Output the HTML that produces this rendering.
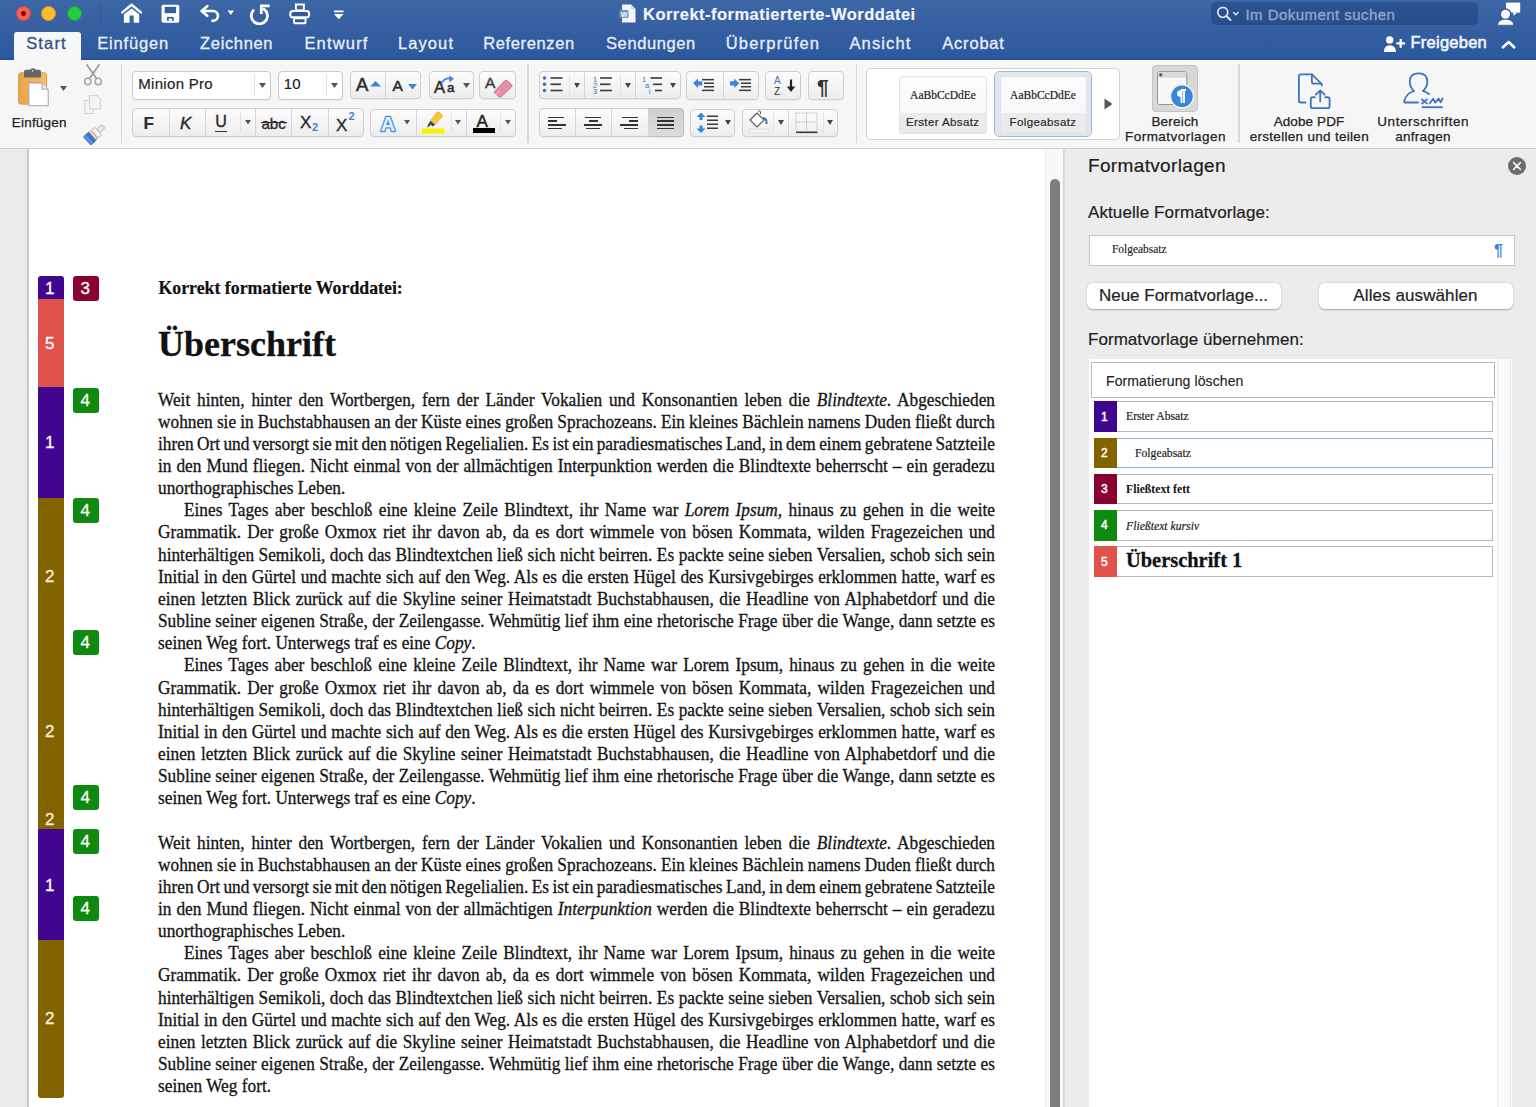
<!DOCTYPE html>
<html><head><meta charset="utf-8"><style>
*{margin:0;padding:0;box-sizing:border-box}
html,body{width:1536px;height:1107px;overflow:hidden;background:#fff;font-family:"Liberation Sans",sans-serif}
.a{position:absolute}
.doc{font-family:"Liberation Serif",serif;font-size:18.6px;color:#151515;text-align:justify;text-align-last:justify;white-space:nowrap;height:22px;line-height:22px;transform:scaleX(0.93);transform-origin:0 0;-webkit-text-stroke:0.32px #151515}
.doc.l{text-align-last:left}
.btn{background:linear-gradient(#fbfbfb,#ececec);border:1px solid #cdcdcd;border-radius:4px;box-shadow:0 0.5px 0.5px rgba(0,0,0,0.06)}
</style></head><body>
<div class="a" style="left:0px;top:0px;width:1536px;height:60px;background:linear-gradient(#3c66a5 0,#375fa1 45%,#2e5aa0 85%,#2b58a0 97%,#27477a 100%)"></div>
<div class="a" style="left:16.2px;top:6.2px;width:15px;height:15px;border-radius:50%;background:#fd5f57;border:1px solid #d8453e"></div>
<div class="a" style="left:41.3px;top:6.2px;width:15px;height:15px;border-radius:50%;background:#fdbb2e;border:1px solid #d99a1e"></div>
<div class="a" style="left:66.5px;top:6.2px;width:15px;height:15px;border-radius:50%;background:#27c93f;border:1px solid #1ea631"></div>
<div class="a" style="left:21.2px;top:11.2px;width:5px;height:5px;border-radius:50%;background:#7a0a06"></div>
<div class="a" style="left:100px;top:4px;width:1px;height:20px;background:rgba(0,0,0,0.12)"></div>
<svg class="a" style="left:120px;top:3px;" width="23" height="21" viewBox="0 0 23 21"><path d="M2.3 9.4 L11.6 1.7 L20.8 9.4" fill="none" stroke="#ffffff" stroke-width="2.5" stroke-linecap="round" stroke-linejoin="round"/><path d="M3.9 11.3 L11.6 5.4 L19.2 11.3 V19.8 H13.7 V12.6 H9.6 V19.8 H3.9 Z" fill="#ffffff"/></svg>
<svg class="a" style="left:161px;top:4px;" width="20" height="20" viewBox="0 0 20 20"><rect x="0.5" y="0.8" width="17.8" height="18" rx="1.8" fill="#ffffff"/><rect x="3.7" y="2.8" width="11.4" height="6.4" fill="#3560a0"/><rect x="6" y="12.9" width="6.8" height="3.9" fill="#3560a0"/><rect x="7.8" y="14.5" width="3.2" height="2.3" fill="#ffffff"/></svg>
<svg class="a" style="left:199px;top:4px;" width="22" height="20" viewBox="0 0 22 20"><path d="M8.2 2.2 L2.6 7 L8.2 11.8" fill="none" stroke="#ffffff" stroke-width="2.7" stroke-linecap="round" stroke-linejoin="round"/><path d="M3.2 7 H14 A4.9 4.9 0 0 1 14 16.8 H13.5" fill="none" stroke="#ffffff" stroke-width="2.7" stroke-linecap="round"/></svg>
<svg class="a" style="left:227px;top:10px;" width="8" height="6" viewBox="0 0 8 6"><path d="M0.5 0.5 H7 L3.75 5 Z" fill="#ffffff"/></svg>
<svg class="a" style="left:249px;top:3px;" width="23" height="22" viewBox="0 0 23 22"><path d="M4.2 7.5 A8.1 8.1 0 1 0 15 6.1" fill="none" stroke="#ffffff" stroke-width="2.7" stroke-linecap="round"/><path d="M12.3 11 V2.9 H20.6" fill="none" stroke="#ffffff" stroke-width="2.8"/></svg>
<svg class="a" style="left:289px;top:3px;" width="22" height="22" viewBox="0 0 22 22"><rect x="6.9" y="1.5" width="8" height="5.8" fill="none" stroke="#ffffff" stroke-width="1.9"/><rect x="1.3" y="8" width="18.8" height="6.4" rx="2.6" fill="#2f5a9c" stroke="#ffffff" stroke-width="2.1"/><rect x="5.1" y="15.4" width="11.4" height="4.8" rx="0.8" fill="#2f5a9c" stroke="#ffffff" stroke-width="1.9"/></svg>
<svg class="a" style="left:333px;top:9px;" width="12" height="12" viewBox="0 0 12 12"><rect x="1" y="1.5" width="9.5" height="1.8" fill="#ffffff"/><path d="M1 5 H10.5 L5.75 10.2 Z" fill="#ffffff"/></svg>
<svg class="a" style="left:619px;top:4px;" width="18" height="19" viewBox="0 0 18 19"><path d="M3 0.5 H12 L16.5 5 V18.5 H3 Z" fill="#f4f6fa"/><path d="M12 0.5 V5 H16.5" fill="#cfd8e6"/><rect x="0.5" y="6" width="9" height="8" rx="1" fill="#6d8fcc"/><text x="5" y="12.5" font-family="Liberation Sans" font-size="7" font-weight="bold" fill="#fff" text-anchor="middle">W</text></svg>
<div class="a" style="left:643.0px;top:5.8px;font-family:'Liberation Sans',sans-serif;font-size:16.5px;line-height:16.5px;font-weight:bold;color:#f2f5fb;white-space:nowrap;letter-spacing:0.48px;-webkit-text-stroke:0.15px #f2f5fb;">Korrekt-formatierterte-Worddatei</div>
<div class="a" style="left:1211px;top:2px;width:267px;height:23px;background:linear-gradient(#2b5291,#284d8b);border-radius:5px"></div>
<svg class="a" style="left:1216px;top:6px;" width="26" height="16" viewBox="0 0 26 16"><circle cx="6.8" cy="6.3" r="5" fill="none" stroke="#dfe6f2" stroke-width="1.7"/><path d="M10.5 10 L14.5 14" stroke="#dfe6f2" stroke-width="1.9" stroke-linecap="round"/><path d="M17.5 6.5 L19.8 8.8 L22.1 6.5" fill="none" stroke="#dfe6f2" stroke-width="1.4" stroke-linecap="round"/></svg>
<div class="a" style="left:1245.5px;top:7.4px;font-family:'Liberation Sans',sans-serif;font-size:15px;line-height:15px;font-weight:normal;color:#91a7cc;white-space:nowrap;letter-spacing:0.45px;-webkit-text-stroke:0.35px #91a7cc;">Im Dokument suchen</div>
<svg class="a" style="left:1497px;top:2px;" width="24" height="24" viewBox="0 0 24 24"><rect x="9" y="0.6" width="14.2" height="10" fill="#ffffff"/><path d="M16.2 10.4 L16.5 13.8 L20.6 10.4 Z" fill="#ffffff"/><circle cx="8.5" cy="12.2" r="5.2" fill="#ffffff" stroke="#2f5b9e" stroke-width="1.4"/><path d="M0.6 23.2 Q1 17.2 8.5 17.2 Q16 17.2 16.9 23.2 Z" fill="#ffffff" stroke="#2f5b9e" stroke-width="0.8"/></svg>
<div class="a" style="left:13.5px;top:32px;width:67px;height:29px;background:#f7f7f7;border-radius:3px 3px 0 0"></div>
<div class="a" style="left:-103.5px;top:35.3px;font-family:'Liberation Sans',sans-serif;font-size:16.5px;line-height:16.5px;font-weight:normal;color:#2e5287;white-space:nowrap;letter-spacing:1.18px;-webkit-text-stroke:0.3px #2e5287;width:300px;text-align:center;">Start</div>
<div class="a" style="left:-16.9px;top:35.3px;font-family:'Liberation Sans',sans-serif;font-size:16.5px;line-height:16.5px;font-weight:normal;color:#e9eef7;white-space:nowrap;letter-spacing:0.83px;-webkit-text-stroke:0.3px #e9eef7;width:300px;text-align:center;">Einfügen</div>
<div class="a" style="left:86.6px;top:35.3px;font-family:'Liberation Sans',sans-serif;font-size:16.5px;line-height:16.5px;font-weight:normal;color:#e9eef7;white-space:nowrap;letter-spacing:0.64px;-webkit-text-stroke:0.3px #e9eef7;width:300px;text-align:center;">Zeichnen</div>
<div class="a" style="left:186.5px;top:35.3px;font-family:'Liberation Sans',sans-serif;font-size:16.5px;line-height:16.5px;font-weight:normal;color:#e9eef7;white-space:nowrap;letter-spacing:1.17px;-webkit-text-stroke:0.3px #e9eef7;width:300px;text-align:center;">Entwurf</div>
<div class="a" style="left:276.0px;top:35.3px;font-family:'Liberation Sans',sans-serif;font-size:16.5px;line-height:16.5px;font-weight:normal;color:#e9eef7;white-space:nowrap;letter-spacing:1.1px;-webkit-text-stroke:0.3px #e9eef7;width:300px;text-align:center;">Layout</div>
<div class="a" style="left:379.0px;top:35.3px;font-family:'Liberation Sans',sans-serif;font-size:16.5px;line-height:16.5px;font-weight:normal;color:#e9eef7;white-space:nowrap;letter-spacing:0.63px;-webkit-text-stroke:0.3px #e9eef7;width:300px;text-align:center;">Referenzen</div>
<div class="a" style="left:500.9px;top:35.3px;font-family:'Liberation Sans',sans-serif;font-size:16.5px;line-height:16.5px;font-weight:normal;color:#e9eef7;white-space:nowrap;letter-spacing:0.59px;-webkit-text-stroke:0.3px #e9eef7;width:300px;text-align:center;">Sendungen</div>
<div class="a" style="left:623.0px;top:35.3px;font-family:'Liberation Sans',sans-serif;font-size:16.5px;line-height:16.5px;font-weight:normal;color:#e9eef7;white-space:nowrap;letter-spacing:1.19px;-webkit-text-stroke:0.3px #e9eef7;width:300px;text-align:center;">Überprüfen</div>
<div class="a" style="left:730.5px;top:35.3px;font-family:'Liberation Sans',sans-serif;font-size:16.5px;line-height:16.5px;font-weight:normal;color:#e9eef7;white-space:nowrap;letter-spacing:1.13px;-webkit-text-stroke:0.3px #e9eef7;width:300px;text-align:center;">Ansicht</div>
<div class="a" style="left:823.5px;top:35.3px;font-family:'Liberation Sans',sans-serif;font-size:16.5px;line-height:16.5px;font-weight:normal;color:#e9eef7;white-space:nowrap;letter-spacing:0.8px;-webkit-text-stroke:0.3px #e9eef7;width:300px;text-align:center;">Acrobat</div>
<svg class="a" style="left:1383px;top:36px;" width="23" height="17" viewBox="0 0 23 17"><circle cx="6.7" cy="3.9" r="3.7" fill="#ffffff"/><path d="M0.9 15.9 Q1 9.2 6.8 9.2 Q12.6 9.2 13 15.9 Z" fill="#ffffff"/><path d="M17.7 2.9 V11.7 M13.3 7.3 H22" stroke="#ffffff" stroke-width="2.3"/></svg>
<div class="a" style="left:1410.5px;top:34.1px;font-family:'Liberation Sans',sans-serif;font-size:16.5px;line-height:16.5px;font-weight:normal;color:#f2f5fb;white-space:nowrap;letter-spacing:0.25px;-webkit-text-stroke:0.6px #f2f5fb;">Freigeben</div>
<svg class="a" style="left:1501px;top:39.5px;" width="15" height="9" viewBox="0 0 15 9"><path d="M2 7.3 L7.6 2 L13.2 7.3" fill="none" stroke="#ffffff" stroke-width="2.6" stroke-linecap="round" stroke-linejoin="round"/></svg>
<div class="a" style="left:0px;top:60px;width:1536px;height:88px;background:#f6f6f6"></div>
<div class="a" style="left:0px;top:147.5px;width:1536px;height:1.5px;background:#cdcdcd"></div>
<svg class="a" style="left:17px;top:68px;" width="33" height="39" viewBox="0 0 33 39"><defs><linearGradient id="cb" x1="0" x2="1"><stop offset="0" stop-color="#e9a445"/><stop offset="1" stop-color="#f2bd6b"/></linearGradient></defs><rect x="1.6" y="4.7" width="28" height="31.5" rx="2.5" fill="url(#cb)" stroke="#d7923a" stroke-width="0.8"/><path d="M7 3.5 Q7 1.8 9 1.8 H13 Q13.5 0.3 16 0.3 Q18.5 0.3 19 1.8 H22 Q24 1.8 24 3.5 V9.5 H7 Z" fill="#666"/><circle cx="15.6" cy="2.8" r="0.9" fill="#ddd"/><path d="M11.8 15 H25 L31.2 21.2 V37.7 H11.8 Z" fill="#fff" stroke="#9a9a9a" stroke-width="0.9"/><path d="M25 15 V21.2 H31.2" fill="#eee" stroke="#9a9a9a" stroke-width="0.9"/></svg>
<svg class="a" style="left:60.0px;top:86.0px;" width="7" height="5" viewBox="0 0 7 5"><path d="M0 0 H7 L3.5 5 Z" fill="#555"/></svg>
<div class="a" style="left:11.8px;top:115.5px;font-family:'Liberation Sans',sans-serif;font-size:13.5px;line-height:13.5px;font-weight:normal;color:#222;white-space:nowrap;letter-spacing:0.2px;-webkit-text-stroke:0.25px #222;">Einfügen</div>
<svg class="a" style="left:83px;top:64px;" width="20" height="22" viewBox="0 0 20 22"><path d="M4 1 L13.5 14.5 M16 1 L6.5 14.5" stroke="#9c9c9c" stroke-width="1.7" stroke-linecap="round"/><circle cx="4.8" cy="17.5" r="3.2" fill="none" stroke="#a8a8a8" stroke-width="1.5"/><circle cx="15.2" cy="17.5" r="3.2" fill="none" stroke="#a8a8a8" stroke-width="1.5"/></svg>
<svg class="a" style="left:83px;top:94px;" width="20" height="21" viewBox="0 0 20 21"><path d="M1.8 6.5 H10 V19.5 H1.8 Z" fill="none" stroke="#d4d4d4" stroke-width="1.2"/><path d="M6.5 1.5 H14 L17.5 5 V15 H6.5 Z" fill="#f4f4f4" stroke="#d4d4d4" stroke-width="1.2"/></svg>
<svg class="a" style="left:81px;top:121px;" width="26" height="24" viewBox="0 0 26 24"><g transform="translate(1.5 0.5) rotate(-42 13 12) scale(0.92) translate(1 1)"><rect x="1" y="6" width="8" height="12" rx="1" fill="#3a76c8" stroke="#2b5a9c" stroke-width="0.8"/><rect x="1.5" y="6.5" width="3" height="11" fill="#5b95dc"/><rect x="9" y="6.5" width="8" height="11" fill="#f7f7f7" stroke="#a9a9a9" stroke-width="0.8"/><rect x="10.5" y="6.8" width="2" height="10.4" fill="#d2b48a"/><rect x="17" y="9.3" width="8" height="5.4" rx="2.4" fill="#ece7da" stroke="#a9a9a9" stroke-width="0.8"/></g></svg>
<div class="a" style="left:120.5px;top:64px;width:1.5px;height:79px;background:#d9d9d9"></div>
<div class="a" style="left:132.3px;top:70.5px;width:139.2px;height:29px;background:#fff;border:1px solid #c9c9c9;border-radius:4px;box-shadow:0 1px 0 rgba(0,0,0,0.05)"></div>
<div class="a" style="left:254.4px;top:74px;width:1px;height:22px;background:#e3e3e3"></div>
<svg class="a" style="left:259.0px;top:82.5px;" width="7" height="5" viewBox="0 0 7 5"><path d="M0 0 H7 L3.5 5 Z" fill="#555"/></svg>
<div class="a" style="left:138.3px;top:76.2px;font-family:'Liberation Sans',sans-serif;font-size:15px;line-height:15px;font-weight:normal;color:#1e1e1e;white-space:nowrap;letter-spacing:0.3px;-webkit-text-stroke:0.2px #1e1e1e;">Minion Pro</div>
<div class="a" style="left:277.5px;top:70.5px;width:65.1px;height:29px;background:#fff;border:1px solid #c9c9c9;border-radius:4px;box-shadow:0 1px 0 rgba(0,0,0,0.05)"></div>
<div class="a" style="left:325.5px;top:74px;width:1px;height:22px;background:#e3e3e3"></div>
<svg class="a" style="left:330.5px;top:82.5px;" width="7" height="5" viewBox="0 0 7 5"><path d="M0 0 H7 L3.5 5 Z" fill="#555"/></svg>
<div class="a" style="left:283.7px;top:76.2px;font-family:'Liberation Sans',sans-serif;font-size:15px;line-height:15px;font-weight:normal;color:#1e1e1e;white-space:nowrap;letter-spacing:0.3px;-webkit-text-stroke:0.2px #1e1e1e;">10</div>
<div class="a" style="left:349.7px;top:71.3px;width:71.30000000000001px;height:27.799999999999997px;background:linear-gradient(#fcfcfc,#ededed);border:1px solid #cfcfcf;border-radius:4px;box-shadow:0 1px 0 rgba(0,0,0,0.04)"></div>
<div class="a" style="left:385.2px;top:72.3px;width:1px;height:25.799999999999997px;background:#d6d6d6"></div>
<div class="a" style="left:356.0px;top:76.0px;font-family:'Liberation Sans',sans-serif;font-size:18.5px;line-height:18.5px;font-weight:normal;color:#2b2b2b;white-space:nowrap;-webkit-text-stroke:0.55px #2b2b2b;">A</div>
<svg class="a" style="left:370px;top:81px;" width="11" height="6" viewBox="0 0 11 6"><path d="M0 5.5 L5.5 0 L11 5.5 Z" fill="#3a86d6"/></svg>
<div class="a" style="left:392.5px;top:78.4px;font-family:'Liberation Sans',sans-serif;font-size:15.5px;line-height:15.5px;font-weight:normal;color:#2b2b2b;white-space:nowrap;-webkit-text-stroke:0.5px #2b2b2b;">A</div>
<svg class="a" style="left:407.5px;top:84px;" width="9" height="6" viewBox="0 0 9 6"><path d="M0 0 H9 L4.5 5.5 Z" fill="#3a86d6"/></svg>
<div class="a" style="left:428.5px;top:71.3px;width:45.10000000000002px;height:27.799999999999997px;background:linear-gradient(#fcfcfc,#ededed);border:1px solid #cfcfcf;border-radius:4px;box-shadow:0 1px 0 rgba(0,0,0,0.04)"></div>
<div class="a" style="left:434.0px;top:78.5px;font-family:'Liberation Sans',sans-serif;font-size:16.5px;line-height:16.5px;font-weight:normal;color:#2b2b2b;white-space:nowrap;-webkit-text-stroke:0.5px #2b2b2b;">A</div>
<div class="a" style="left:447.0px;top:81.1px;font-family:'Liberation Sans',sans-serif;font-size:13.5px;line-height:13.5px;font-weight:normal;color:#2b2b2b;white-space:nowrap;-webkit-text-stroke:0.5px #2b2b2b;">a</div>
<svg class="a" style="left:440px;top:75px;" width="16" height="10" viewBox="0 0 16 10"><path d="M1.5 8.5 Q4 2.5 11 3.5" fill="none" stroke="#3a86d6" stroke-width="1.8"/><path d="M9 0.5 L14 3.5 L9.5 7.5 Z" fill="#3a86d6"/></svg>
<svg class="a" style="left:462.5px;top:82.5px;" width="7" height="5" viewBox="0 0 7 5"><path d="M0 0 H7 L3.5 5 Z" fill="#555"/></svg>
<div class="a" style="left:479.2px;top:71.3px;width:36.50000000000006px;height:27.799999999999997px;background:linear-gradient(#fcfcfc,#ededed);border:1px solid #cfcfcf;border-radius:4px;box-shadow:0 1px 0 rgba(0,0,0,0.04)"></div>
<div class="a" style="left:485.0px;top:74.9px;font-family:'Liberation Sans',sans-serif;font-size:15.5px;line-height:15.5px;font-weight:normal;color:#3a3a3a;white-space:nowrap;-webkit-text-stroke:0.4px #3a3a3a;">A</div>
<svg class="a" style="left:491px;top:78px;" width="23" height="20" viewBox="0 0 23 20"><path d="M3 14 L13.5 3 Q15 1.5 16.5 2.8 L20.5 6.5 Q21.7 7.8 20.3 9.2 L10.5 18.5 Q9 19.8 7.5 18.5 L3.3 14.6 Z" fill="#e48fa8" stroke="#c96c88" stroke-width="0.9"/><path d="M5 16.5 L9 12.8" stroke="#f5c3d2" stroke-width="1"/></svg>
<div class="a" style="left:527px;top:64px;width:1.5px;height:79px;background:#d9d9d9"></div>
<div class="a" style="left:132.3px;top:108.4px;width:231.7px;height:28.5px;background:linear-gradient(#fcfcfc,#ededed);border:1px solid #cfcfcf;border-radius:4px;box-shadow:0 1px 0 rgba(0,0,0,0.04)"></div>
<div class="a" style="left:168.6px;top:109.4px;width:1px;height:26.5px;background:#d6d6d6"></div>
<div class="a" style="left:204.8px;top:109.4px;width:1px;height:26.5px;background:#d6d6d6"></div>
<div class="a" style="left:255.2px;top:109.4px;width:1px;height:26.5px;background:#d6d6d6"></div>
<div class="a" style="left:291.3px;top:109.4px;width:1px;height:26.5px;background:#d6d6d6"></div>
<div class="a" style="left:327.6px;top:109.4px;width:1px;height:26.5px;background:#d6d6d6"></div>
<div class="a" style="left:240.2px;top:112.4px;width:1px;height:20.5px;background:#e2e2e2"></div>
<div class="a" style="left:143.5px;top:114.6px;font-family:'Liberation Sans',sans-serif;font-size:17px;line-height:17px;font-weight:bold;color:#2b2b2b;white-space:nowrap;-webkit-text-stroke:0.2px #2b2b2b;">F</div>
<div class="a" style="left:180.0px;top:114.6px;font-family:'Liberation Sans',sans-serif;font-size:17px;line-height:17px;font-weight:normal;color:#2b2b2b;white-space:nowrap;font-style:italic;-webkit-text-stroke:0.4px #2b2b2b;">K</div>
<div class="a" style="left:215.2px;top:113.5px;font-family:'Liberation Sans',sans-serif;font-size:16px;line-height:16px;font-weight:normal;color:#2b2b2b;white-space:nowrap;-webkit-text-stroke:0.4px #2b2b2b;">U</div>
<div class="a" style="left:215px;top:130.5px;width:12px;height:1.6px;background:#333"></div>
<svg class="a" style="left:244.8px;top:120.05px;" width="6" height="4.5" viewBox="0 0 6 4.5"><path d="M0 0 H6 L3.0 4.5 Z" fill="#555"/></svg>
<div class="a" style="left:261.5px;top:115.8px;font-family:'Liberation Sans',sans-serif;font-size:15px;line-height:15px;font-weight:normal;color:#2b2b2b;white-space:nowrap;-webkit-text-stroke:0.4px #2b2b2b;">abc</div>
<div class="a" style="left:261px;top:122.2px;width:26px;height:1.3px;background:#333"></div>
<div class="a" style="left:300.0px;top:114.1px;font-family:'Liberation Sans',sans-serif;font-size:17px;line-height:17px;font-weight:normal;color:#2b2b2b;white-space:nowrap;-webkit-text-stroke:0.4px #2b2b2b;">X</div>
<div class="a" style="left:312.0px;top:122.2px;font-family:'Liberation Sans',sans-serif;font-size:11px;line-height:11px;font-weight:bold;color:#3a86d6;white-space:nowrap;">2</div>
<div class="a" style="left:336.0px;top:116.6px;font-family:'Liberation Sans',sans-serif;font-size:17px;line-height:17px;font-weight:normal;color:#2b2b2b;white-space:nowrap;-webkit-text-stroke:0.4px #2b2b2b;">X</div>
<div class="a" style="left:348.5px;top:111.2px;font-family:'Liberation Sans',sans-serif;font-size:11px;line-height:11px;font-weight:bold;color:#3a86d6;white-space:nowrap;">2</div>
<div class="a" style="left:370.4px;top:109px;width:145.30000000000007px;height:27.80000000000001px;background:linear-gradient(#fcfcfc,#ededed);border:1px solid #cfcfcf;border-radius:4px;box-shadow:0 1px 0 rgba(0,0,0,0.04)"></div>
<div class="a" style="left:415.5px;top:110px;width:1px;height:25.80000000000001px;background:#d6d6d6"></div>
<div class="a" style="left:465.6px;top:110px;width:1px;height:25.80000000000001px;background:#d6d6d6"></div>
<div class="a" style="left:450.8px;top:113px;width:1px;height:19.80000000000001px;background:#e2e2e2"></div>
<div class="a" style="left:500px;top:113px;width:1px;height:19.80000000000001px;background:#e2e2e2"></div>
<svg class="a" style="left:377px;top:110px;" width="24" height="24" viewBox="0 0 24 24"><text x="11" y="20.5" font-family="Liberation Sans" font-weight="bold" font-size="20" text-anchor="middle" fill="#dff0fc" stroke="#4a8fd6" stroke-width="2.6" stroke-linejoin="round" paint-order="stroke">A</text></svg>
<svg class="a" style="left:404.0px;top:120.25px;" width="6" height="4.5" viewBox="0 0 6 4.5"><path d="M0 0 H6 L3.0 4.5 Z" fill="#555"/></svg>
<svg class="a" style="left:421px;top:110px;" width="24" height="24" viewBox="0 0 24 24"><path d="M9.5 11 L15.5 2.5 Q16.5 1.2 17.8 2.2 L21 4.8 Q22 5.8 21 7 L14 14.5 Z" fill="#f6c344" stroke="#e0a92a" stroke-width="0.7"/><path d="M9.5 11 L14 14.5 L12 16.5 L7.8 13 Z" fill="#3d3d3d"/><path d="M7.8 13 L10 15.2 L6 17.5 Z" fill="#3d3d3d"/><rect x="0.5" y="18.5" width="23" height="5" fill="#fbf200"/></svg>
<svg class="a" style="left:455.0px;top:120.25px;" width="6" height="4.5" viewBox="0 0 6 4.5"><path d="M0 0 H6 L3.0 4.5 Z" fill="#555"/></svg>
<div class="a" style="left:476.5px;top:113.1px;font-family:'Liberation Sans',sans-serif;font-size:17px;line-height:17px;font-weight:normal;color:#222;white-space:nowrap;-webkit-text-stroke:0.5px #222;">A</div>
<div class="a" style="left:473px;top:128px;width:22px;height:5px;background:#000"></div>
<svg class="a" style="left:505.0px;top:120.25px;" width="6" height="4.5" viewBox="0 0 6 4.5"><path d="M0 0 H6 L3.0 4.5 Z" fill="#555"/></svg>
<div class="a" style="left:538.5px;top:70.9px;width:142.0px;height:28.099999999999994px;background:linear-gradient(#fcfcfc,#ededed);border:1px solid #cfcfcf;border-radius:4px;box-shadow:0 1px 0 rgba(0,0,0,0.04)"></div>
<div class="a" style="left:584.2px;top:71.9px;width:1px;height:26.099999999999994px;background:#d6d6d6"></div>
<div class="a" style="left:635.2px;top:71.9px;width:1px;height:26.099999999999994px;background:#d6d6d6"></div>
<div class="a" style="left:569.4px;top:74.9px;width:1px;height:20.099999999999994px;background:#e2e2e2"></div>
<div class="a" style="left:619.6px;top:74.9px;width:1px;height:20.099999999999994px;background:#e2e2e2"></div>
<svg class="a" style="left:542px;top:75px;" width="24" height="19" viewBox="0 0 24 19"><circle cx="2.5" cy="3" r="1.8" fill="#3b72bf"/><circle cx="2.5" cy="9.3" r="1.8" fill="#3b72bf"/><circle cx="2.5" cy="15.5" r="1.8" fill="#3b72bf"/><rect x="8.5" y="2.2" width="12" height="1.6" fill="#3a3a3a"/><rect x="8.5" y="8.5" width="10.5" height="1.6" fill="#3a3a3a"/><rect x="8.5" y="14.7" width="12" height="1.6" fill="#3a3a3a"/></svg>
<svg class="a" style="left:574.4px;top:82.5px;" width="6" height="5" viewBox="0 0 6 5"><path d="M0 0 H6 L3.0 5 Z" fill="#444"/></svg>
<svg class="a" style="left:591px;top:75px;" width="24" height="20" viewBox="0 0 24 20"><text x="4" y="6.5" font-family="Liberation Sans" font-size="7.5" fill="#3b72bf" text-anchor="middle">1</text><text x="4" y="12.8" font-family="Liberation Sans" font-size="7.5" fill="#3b72bf" text-anchor="middle">2</text><text x="4" y="19" font-family="Liberation Sans" font-size="7.5" fill="#3b72bf" text-anchor="middle">3</text><rect x="9" y="2.2" width="12" height="1.6" fill="#3a3a3a"/><rect x="9" y="8.5" width="10.5" height="1.6" fill="#3a3a3a"/><rect x="9" y="14.7" width="12" height="1.6" fill="#3a3a3a"/></svg>
<svg class="a" style="left:624.5px;top:82.5px;" width="6" height="5" viewBox="0 0 6 5"><path d="M0 0 H6 L3.0 5 Z" fill="#444"/></svg>
<svg class="a" style="left:641px;top:75px;" width="24" height="20" viewBox="0 0 24 20"><text x="3" y="6.5" font-family="Liberation Sans" font-size="7.5" fill="#3b72bf" text-anchor="middle">1</text><text x="6" y="12.8" font-family="Liberation Sans" font-size="7.5" fill="#3b72bf" text-anchor="middle">a</text><text x="8.5" y="19" font-family="Liberation Sans" font-size="7.5" fill="#3b72bf" text-anchor="middle">i</text><rect x="9.5" y="2.2" width="11.5" height="1.6" fill="#3a3a3a"/><rect x="12" y="8.5" width="9" height="1.6" fill="#3a3a3a"/><rect x="14" y="14.7" width="7" height="1.6" fill="#3a3a3a"/></svg>
<svg class="a" style="left:670.0px;top:82.5px;" width="6" height="5" viewBox="0 0 6 5"><path d="M0 0 H6 L3.0 5 Z" fill="#444"/></svg>
<div class="a" style="left:686.4px;top:70.8px;width:73.10000000000002px;height:28.900000000000006px;background:linear-gradient(#fcfcfc,#ededed);border:1px solid #cfcfcf;border-radius:4px;box-shadow:0 1px 0 rgba(0,0,0,0.04)"></div>
<div class="a" style="left:722.8px;top:71.8px;width:1px;height:26.900000000000006px;background:#d6d6d6"></div>
<svg class="a" style="left:692px;top:77px;" width="24" height="17" viewBox="0 0 24 17"><path d="M1 6.3 L6 1.5 V4.2 H10.3 V8.4 H6 V11.1 Z" fill="#3a86d6"/><rect x="10" y="1.9" width="12" height="1.5" fill="#3a3a3a"/><rect x="12" y="5.5" width="10" height="1.5" fill="#3a3a3a"/><rect x="12" y="9" width="10" height="1.5" fill="#3a3a3a"/><rect x="10" y="12.6" width="12" height="1.5" fill="#3a3a3a"/></svg>
<svg class="a" style="left:729px;top:77px;" width="24" height="17" viewBox="0 0 24 17"><path d="M10.3 6.3 L5.3 1.5 V4.2 H1 V8.4 H5.3 V11.1 Z" fill="#3a86d6"/><rect x="10" y="1.9" width="12" height="1.5" fill="#3a3a3a"/><rect x="12" y="5.5" width="10" height="1.5" fill="#3a3a3a"/><rect x="12" y="9" width="10" height="1.5" fill="#3a3a3a"/><rect x="10" y="12.6" width="12" height="1.5" fill="#3a3a3a"/></svg>
<div class="a" style="left:765.3px;top:70.8px;width:36.0px;height:28.900000000000006px;background:linear-gradient(#fcfcfc,#ededed);border:1px solid #cfcfcf;border-radius:4px;box-shadow:0 1px 0 rgba(0,0,0,0.04)"></div>
<div class="a" style="left:774.0px;top:76.0px;font-family:'Liberation Sans',sans-serif;font-size:10px;line-height:10px;font-weight:normal;color:#3b72bf;white-space:nowrap;">A</div>
<div class="a" style="left:774.0px;top:86.5px;font-family:'Liberation Sans',sans-serif;font-size:10px;line-height:10px;font-weight:normal;color:#333;white-space:nowrap;">Z</div>
<svg class="a" style="left:786px;top:79px;" width="10" height="14" viewBox="0 0 10 14"><path d="M5 0.5 V10" stroke="#222" stroke-width="2.2"/><path d="M0.8 7.5 L5 13 L9.2 7.5 Z" fill="#222"/></svg>
<div class="a" style="left:808.3px;top:70.8px;width:35.700000000000045px;height:28.900000000000006px;background:linear-gradient(#fcfcfc,#ededed);border:1px solid #cfcfcf;border-radius:4px;box-shadow:0 1px 0 rgba(0,0,0,0.04)"></div>
<div class="a" style="left:817.0px;top:75.7px;font-family:'Liberation Sans',sans-serif;font-size:21px;line-height:21px;font-weight:bold;color:#333;white-space:nowrap;">¶</div>
<div class="a" style="left:855.5px;top:64px;width:1.5px;height:79px;background:#d9d9d9"></div>
<div class="a" style="left:538.5px;top:108.4px;width:145.5px;height:28.599999999999994px;background:linear-gradient(#fcfcfc,#ededed);border:1px solid #cfcfcf;border-radius:4px;box-shadow:0 1px 0 rgba(0,0,0,0.04)"></div>
<div class="a" style="left:647.7px;top:108.4px;width:36.299999999999955px;height:28.599999999999994px;background:linear-gradient(#cfcfcf,#dcdcdc);border:1px solid #bdbdbd;border-radius:0 4px 4px 0"></div>
<div class="a" style="left:574.8px;top:109.4px;width:1px;height:26.599999999999994px;background:#d6d6d6"></div>
<div class="a" style="left:611.3px;top:109.4px;width:1px;height:26.599999999999994px;background:#d6d6d6"></div>
<div class="a" style="left:647.7px;top:109.4px;width:1px;height:26.599999999999994px;background:#d6d6d6"></div>
<div class="a" style="left:548px;top:116.5px;width:16px;height:1.6px;background:#333"></div>
<div class="a" style="left:548px;top:120.2px;width:9px;height:1.6px;background:#333"></div>
<div class="a" style="left:548px;top:124px;width:18px;height:1.6px;background:#333"></div>
<div class="a" style="left:548px;top:127.7px;width:14px;height:1.6px;background:#333"></div>
<div class="a" style="left:585.0px;top:116.5px;width:16px;height:1.6px;background:#333"></div>
<div class="a" style="left:588.5px;top:120.2px;width:9px;height:1.6px;background:#333"></div>
<div class="a" style="left:584.0px;top:124px;width:18px;height:1.6px;background:#333"></div>
<div class="a" style="left:586.0px;top:127.7px;width:14px;height:1.6px;background:#333"></div>
<div class="a" style="left:622px;top:116.5px;width:16px;height:1.6px;background:#333"></div>
<div class="a" style="left:629px;top:120.2px;width:9px;height:1.6px;background:#333"></div>
<div class="a" style="left:620px;top:124px;width:18px;height:1.6px;background:#333"></div>
<div class="a" style="left:624px;top:127.7px;width:14px;height:1.6px;background:#333"></div>
<div class="a" style="left:656.5px;top:116.5px;width:17.5px;height:1.6px;background:#333"></div>
<div class="a" style="left:656.5px;top:120.2px;width:17.5px;height:1.6px;background:#333"></div>
<div class="a" style="left:656.5px;top:124px;width:17.5px;height:1.6px;background:#333"></div>
<div class="a" style="left:656.5px;top:127.7px;width:17.5px;height:1.6px;background:#333"></div>
<div class="a" style="left:690.3px;top:108.9px;width:45.0px;height:27.900000000000006px;background:linear-gradient(#fcfcfc,#ededed);border:1px solid #cfcfcf;border-radius:4px;box-shadow:0 1px 0 rgba(0,0,0,0.04)"></div>
<svg class="a" style="left:696px;top:112px;" width="25" height="22" viewBox="0 0 25 22"><path d="M5 0.5 L9.5 5 H6.5 V8 H3.5 V5 H0.5 Z" fill="#3a86d6"/><path d="M5 21 L9.5 16.5 H6.5 V13.5 H3.5 V16.5 H0.5 Z" fill="#3a86d6"/><rect x="11" y="3.5" width="11" height="1.5" fill="#3a3a3a"/><rect x="11" y="7.5" width="11" height="1.5" fill="#3a3a3a"/><rect x="11" y="11.5" width="11" height="1.5" fill="#3a3a3a"/><rect x="11" y="15.5" width="11" height="1.5" fill="#3a3a3a"/></svg>
<svg class="a" style="left:724.5px;top:120.0px;" width="6" height="5" viewBox="0 0 6 5"><path d="M0 0 H6 L3.0 5 Z" fill="#444"/></svg>
<div class="a" style="left:741.5px;top:108.9px;width:96.70000000000005px;height:27.900000000000006px;background:linear-gradient(#fcfcfc,#ededed);border:1px solid #cfcfcf;border-radius:4px;box-shadow:0 1px 0 rgba(0,0,0,0.04)"></div>
<div class="a" style="left:787.8px;top:109.9px;width:1px;height:25.900000000000006px;background:#d6d6d6"></div>
<div class="a" style="left:773px;top:112.9px;width:1px;height:19.900000000000006px;background:#e2e2e2"></div>
<div class="a" style="left:823px;top:112.9px;width:1px;height:19.900000000000006px;background:#e2e2e2"></div>
<svg class="a" style="left:747px;top:110px;" width="24" height="24" viewBox="0 0 24 24"><path d="M3 10 L10 3 L17 10 L10 17 Z" fill="#fff" stroke="#555" stroke-width="1.1"/><path d="M11 1.5 Q12.5 0 13.5 1.5 V4" fill="none" stroke="#555" stroke-width="1"/><path d="M16 8 Q19.5 8.5 19.5 12 V14" fill="none" stroke="#3b72bf" stroke-width="2"/><rect x="1.5" y="19" width="21" height="4" rx="1.5" fill="#f3f3f3" stroke="#d8d8d8" stroke-width="0.8"/></svg>
<svg class="a" style="left:777.5px;top:120.0px;" width="6" height="5" viewBox="0 0 6 5"><path d="M0 0 H6 L3.0 5 Z" fill="#444"/></svg>
<svg class="a" style="left:795px;top:112px;" width="23" height="22" viewBox="0 0 23 22"><path d="M1 1 H22 M1 1 V19 M22 1 V19 M11.5 1 V19 M1 10 H22" stroke="#9a9a9a" stroke-width="0.8" stroke-dasharray="1.3 1.3"/><rect x="1" y="19.5" width="21.5" height="1.6" fill="#333"/></svg>
<svg class="a" style="left:827.0px;top:120.0px;" width="6" height="5" viewBox="0 0 6 5"><path d="M0 0 H6 L3.0 5 Z" fill="#444"/></svg>
<div class="a" style="left:865.5px;top:68.2px;width:254.5px;height:72px;background:#fff;border:1px solid #d3d3d3;border-radius:4px"></div>
<div class="a" style="left:899.2px;top:75.5px;width:87.5px;height:58.3px;background:linear-gradient(#fcfcfc 0,#f8f8f8 64%,#ececec 64%,#eaeaea 100%);border:1px solid #e2e2e2;border-radius:3px"></div>
<div class="a" style="left:993.6px;top:70.6px;width:98.8px;height:66.9px;background:#dfe7f3;border:1.5px solid #a5b7d2;border-radius:5px"></div>
<div class="a" style="left:999.5px;top:75.5px;width:87.5px;height:58.3px;background:linear-gradient(#fcfcfc 0,#f8f8f8 64%,#ececec 64%,#eaeaea 100%);border:1px solid #dbe2ec;border-radius:3px"></div>
<div class="a" style="left:793.0px;top:88.7px;font-family:'Liberation Serif',serif;font-size:12.5px;line-height:12.5px;font-weight:normal;color:#1a1a1a;white-space:nowrap;-webkit-text-stroke:0.2px #1a1a1a;width:300px;text-align:center;transform:scaleX(0.92);">AaBbCcDdEe</div>
<div class="a" style="left:893.0px;top:88.7px;font-family:'Liberation Serif',serif;font-size:12.5px;line-height:12.5px;font-weight:normal;color:#1a1a1a;white-space:nowrap;-webkit-text-stroke:0.2px #1a1a1a;width:300px;text-align:center;transform:scaleX(0.92);">AaBbCcDdEe</div>
<div class="a" style="left:792.7px;top:116.8px;font-family:'Liberation Sans',sans-serif;font-size:11.5px;line-height:11.5px;font-weight:normal;color:#2a2a2a;white-space:nowrap;letter-spacing:0.4px;-webkit-text-stroke:0.2px #2a2a2a;width:300px;text-align:center;">Erster Absatz</div>
<div class="a" style="left:893.0px;top:116.8px;font-family:'Liberation Sans',sans-serif;font-size:11.5px;line-height:11.5px;font-weight:normal;color:#2a2a2a;white-space:nowrap;letter-spacing:0.4px;-webkit-text-stroke:0.2px #2a2a2a;width:300px;text-align:center;">Folgeabsatz</div>
<svg class="a" style="left:1104px;top:98px;" width="9" height="12" viewBox="0 0 9 12"><path d="M0.5 0.5 L8.5 6 L0.5 11.5 Z" fill="#555"/></svg>
<div class="a" style="left:1151.6px;top:65.2px;width:46.4px;height:46.8px;background:#d8d8d8;border:1px solid #c4c4c4;border-radius:4px"></div>
<svg class="a" style="left:1156px;top:70px;" width="40" height="40" viewBox="0 0 40 40"><rect x="1.5" y="1.7" width="29.3" height="32.8" rx="2" fill="#f8f8f8" stroke="#8a8a8a" stroke-width="0.9"/><rect x="2" y="2.2" width="28.3" height="5.5" rx="1.5" fill="#d9d9d9"/><circle cx="4.8" cy="4.8" r="1.6" fill="#555"/><circle cx="26" cy="26.3" r="11.5" fill="#3a86d6" stroke="#f0f0f0" stroke-width="1.5"/><path d="M25 20 H30 M28 20 V33 M25.5 20 V33" stroke="#fff" stroke-width="1.8"/><path d="M25.5 20 Q21 20 21 23.5 Q21 27 25.5 27 Z" fill="#fff"/></svg>
<div class="a" style="left:1025.0px;top:115.4px;font-family:'Liberation Sans',sans-serif;font-size:13.5px;line-height:13.5px;font-weight:normal;color:#222;white-space:nowrap;letter-spacing:0.2px;-webkit-text-stroke:0.25px #222;width:300px;text-align:center;">Bereich</div>
<div class="a" style="left:1025.5px;top:129.5px;font-family:'Liberation Sans',sans-serif;font-size:13.5px;line-height:13.5px;font-weight:normal;color:#222;white-space:nowrap;letter-spacing:0.45px;-webkit-text-stroke:0.25px #222;width:300px;text-align:center;">Formatvorlagen</div>
<div class="a" style="left:1238px;top:64px;width:1.5px;height:79px;background:#d9d9d9"></div>
<svg class="a" style="left:1296px;top:72px;" width="36" height="38" viewBox="0 0 36 38"><g fill="none" stroke="#3d74c0" stroke-width="1.8" stroke-linecap="round" stroke-linejoin="round"><path d="M9.5 30.5 H4.9 Q2.9 30.5 2.9 28.5 V4.3 Q2.9 2.3 4.9 2.3 H15.9 L25.8 12.2 V13.5"/><path d="M15.9 2.3 V9.7 Q15.9 11.7 17.9 11.7 H25.5"/><path d="M18.8 25.25 H16.8 Q14.8 25.25 14.8 27.25 V34.2 Q14.8 36.2 16.8 36.2 H31.6 Q33.6 36.2 33.6 34.2 V27.25 Q33.6 25.25 31.6 25.25 H29.3"/><path d="M24.2 29.4 V18.5 M19.8 22.7 L24.2 18.5 L28.6 22.7"/></g></svg>
<div class="a" style="left:1159.0px;top:115.4px;font-family:'Liberation Sans',sans-serif;font-size:13.5px;line-height:13.5px;font-weight:normal;color:#222;white-space:nowrap;letter-spacing:0.1px;-webkit-text-stroke:0.25px #222;width:300px;text-align:center;">Adobe PDF</div>
<div class="a" style="left:1159.3px;top:129.5px;font-family:'Liberation Sans',sans-serif;font-size:13.5px;line-height:13.5px;font-weight:normal;color:#222;white-space:nowrap;letter-spacing:0.3px;-webkit-text-stroke:0.25px #222;width:300px;text-align:center;">erstellen und teilen</div>
<svg class="a" style="left:1401px;top:71px;" width="44" height="40" viewBox="0 0 44 40"><g fill="none" stroke="#3d74c0" stroke-width="1.8" stroke-linecap="round" stroke-linejoin="round"><path d="M17 31.5 H4 Q3 31.5 3.2 30.3 Q4.8 22.5 13 20 Q8.8 16.5 8.8 10.5 Q8.8 2.3 17.6 2.3 Q26.3 2.3 26.3 10.5 Q26.3 16.5 21.8 20 Q25.5 21 28 23"/><path d="M21 28.5 L26 32.5 M26 28.5 L21 32.5"/><path d="M28.8 32.2 L32.2 27.8 L34.2 31.6 L37.6 27.6 L39.6 31.2 L41.6 27.5"/></g><rect x="20.8" y="35.3" width="21" height="1.8" fill="#3d74c0"/></svg>
<div class="a" style="left:1273.2px;top:115.4px;font-family:'Liberation Sans',sans-serif;font-size:13.5px;line-height:13.5px;font-weight:normal;color:#222;white-space:nowrap;letter-spacing:0.55px;-webkit-text-stroke:0.25px #222;width:300px;text-align:center;">Unterschriften</div>
<div class="a" style="left:1273.0px;top:129.5px;font-family:'Liberation Sans',sans-serif;font-size:13.5px;line-height:13.5px;font-weight:normal;color:#222;white-space:nowrap;letter-spacing:0.3px;-webkit-text-stroke:0.25px #222;width:300px;text-align:center;">anfragen</div>
<div class="a" style="left:0px;top:149px;width:28px;height:958px;background:#ebebeb"></div>
<div class="a" style="left:27px;top:149px;width:2px;height:958px;background:#cbcbcb"></div>
<div class="a" style="left:29px;top:149px;width:1016px;height:958px;background:#fff"></div>
<div class="a" style="left:1045px;top:149px;width:19px;height:958px;background:#f8f8f8;border-left:1px solid #ececec;border-right:1px solid #d6d6d6"></div>
<div class="a" style="left:1050px;top:179px;width:10px;height:940px;background:#7e7e7e;border-radius:5px"></div>
<div class="a" style="left:38px;top:276px;width:26px;height:23px;background:#40068f;border-radius:3px 3px 0 0;"></div>
<div class="a" style="left:38px;top:299px;width:26px;height:88px;background:#e0524a;"></div>
<div class="a" style="left:38px;top:387px;width:26px;height:111px;background:#40068f;"></div>
<div class="a" style="left:38px;top:498px;width:26px;height:156px;background:#836300;"></div>
<div class="a" style="left:38px;top:654px;width:26px;height:155px;background:#836300;"></div>
<div class="a" style="left:38px;top:809px;width:26px;height:20px;background:#836300;"></div>
<div class="a" style="left:38px;top:829px;width:26px;height:111px;background:#40068f;"></div>
<div class="a" style="left:38px;top:940px;width:26px;height:158px;background:#836300;border-radius:0 0 3px 3px;"></div>
<div class="a" style="left:-100.2px;top:279.9px;font-family:'Liberation Sans',sans-serif;font-size:17px;line-height:17px;font-weight:normal;color:#fff;white-space:nowrap;width:300px;text-align:center;-webkit-text-stroke:0.3px currentColor;">1</div>
<div class="a" style="left:-100.2px;top:334.9px;font-family:'Liberation Sans',sans-serif;font-size:17px;line-height:17px;font-weight:normal;color:#fff;white-space:nowrap;width:300px;text-align:center;-webkit-text-stroke:0.3px currentColor;">5</div>
<div class="a" style="left:-100.2px;top:433.9px;font-family:'Liberation Sans',sans-serif;font-size:17px;line-height:17px;font-weight:normal;color:#fff;white-space:nowrap;width:300px;text-align:center;-webkit-text-stroke:0.3px currentColor;">1</div>
<div class="a" style="left:-100.2px;top:567.9px;font-family:'Liberation Sans',sans-serif;font-size:17px;line-height:17px;font-weight:normal;color:#f6efd8;white-space:nowrap;width:300px;text-align:center;-webkit-text-stroke:0.3px currentColor;">2</div>
<div class="a" style="left:-100.2px;top:722.9px;font-family:'Liberation Sans',sans-serif;font-size:17px;line-height:17px;font-weight:normal;color:#f6efd8;white-space:nowrap;width:300px;text-align:center;-webkit-text-stroke:0.3px currentColor;">2</div>
<div class="a" style="left:-100.2px;top:810.9px;font-family:'Liberation Sans',sans-serif;font-size:17px;line-height:17px;font-weight:normal;color:#f6efd8;white-space:nowrap;width:300px;text-align:center;-webkit-text-stroke:0.3px currentColor;">2</div>
<div class="a" style="left:-100.2px;top:876.9px;font-family:'Liberation Sans',sans-serif;font-size:17px;line-height:17px;font-weight:normal;color:#fff;white-space:nowrap;width:300px;text-align:center;-webkit-text-stroke:0.3px currentColor;">1</div>
<div class="a" style="left:-100.2px;top:1009.9px;font-family:'Liberation Sans',sans-serif;font-size:17px;line-height:17px;font-weight:normal;color:#f6efd8;white-space:nowrap;width:300px;text-align:center;-webkit-text-stroke:0.3px currentColor;">2</div>
<div class="a" style="left:73px;top:276.0px;width:26px;height:25px;background:#8a0231;border-radius:3px"></div>
<div class="a" style="left:-64.7px;top:280.0px;font-family:'Liberation Sans',sans-serif;font-size:17px;line-height:17px;font-weight:normal;color:#fff;white-space:nowrap;width:300px;text-align:center;-webkit-text-stroke:0.3px #fff;">3</div>
<div class="a" style="left:73px;top:387.5px;width:26px;height:25px;background:#108910;border-radius:3px"></div>
<div class="a" style="left:-64.7px;top:391.5px;font-family:'Liberation Sans',sans-serif;font-size:17px;line-height:17px;font-weight:normal;color:#fff;white-space:nowrap;width:300px;text-align:center;-webkit-text-stroke:0.3px #fff;">4</div>
<div class="a" style="left:73px;top:498.0px;width:26px;height:25px;background:#108910;border-radius:3px"></div>
<div class="a" style="left:-64.7px;top:502.0px;font-family:'Liberation Sans',sans-serif;font-size:17px;line-height:17px;font-weight:normal;color:#fff;white-space:nowrap;width:300px;text-align:center;-webkit-text-stroke:0.3px #fff;">4</div>
<div class="a" style="left:73px;top:630.0px;width:26px;height:25px;background:#108910;border-radius:3px"></div>
<div class="a" style="left:-64.7px;top:634.0px;font-family:'Liberation Sans',sans-serif;font-size:17px;line-height:17px;font-weight:normal;color:#fff;white-space:nowrap;width:300px;text-align:center;-webkit-text-stroke:0.3px #fff;">4</div>
<div class="a" style="left:73px;top:785.0px;width:26px;height:25px;background:#108910;border-radius:3px"></div>
<div class="a" style="left:-64.7px;top:789.0px;font-family:'Liberation Sans',sans-serif;font-size:17px;line-height:17px;font-weight:normal;color:#fff;white-space:nowrap;width:300px;text-align:center;-webkit-text-stroke:0.3px #fff;">4</div>
<div class="a" style="left:73px;top:829.0px;width:26px;height:25px;background:#108910;border-radius:3px"></div>
<div class="a" style="left:-64.7px;top:833.0px;font-family:'Liberation Sans',sans-serif;font-size:17px;line-height:17px;font-weight:normal;color:#fff;white-space:nowrap;width:300px;text-align:center;-webkit-text-stroke:0.3px #fff;">4</div>
<div class="a" style="left:73px;top:895.5px;width:26px;height:25px;background:#108910;border-radius:3px"></div>
<div class="a" style="left:-64.7px;top:899.5px;font-family:'Liberation Sans',sans-serif;font-size:17px;line-height:17px;font-weight:normal;color:#fff;white-space:nowrap;width:300px;text-align:center;-webkit-text-stroke:0.3px #fff;">4</div>
<div class="a" style="left:158.5px;top:279.5px;font-family:'Liberation Serif',serif;font-size:17.8px;line-height:17.8px;font-weight:bold;color:#111;white-space:nowrap;-webkit-text-stroke:0.2px #111;">Korrekt formatierte Worddatei:</div>
<div class="a" style="left:158.0px;top:325.9px;font-family:'Liberation Serif',serif;font-size:36px;line-height:36px;font-weight:bold;color:#111;white-space:nowrap;-webkit-text-stroke:0.3px #111;">Überschrift</div>
<div class="a doc" style="top:388.5px;left:158px;width:900.0px">Weit hinten, hinter den Wortbergen, fern der Länder Vokalien und Konsonantien leben die <i>Blindtexte</i>. Abgeschieden</div>
<div class="a doc" style="top:410.6px;left:158px;word-spacing:-0.57px;width:900.0px">wohnen sie in Buchstabhausen an der Küste eines großen Sprachozeans. Ein kleines Bächlein namens Duden fließt durch</div>
<div class="a doc" style="top:432.8px;left:158px;word-spacing:-1.32px;width:900.0px">ihren Ort und versorgt sie mit den nötigen Regelialien. Es ist ein paradiesmatisches Land, in dem einem gebratene Satzteile</div>
<div class="a doc" style="top:454.9px;left:158px;width:900.0px">in den Mund fliegen. Nicht einmal von der allmächtigen Interpunktion werden die Blindtexte beherrscht – ein geradezu</div>
<div class="a doc l" style="top:477.1px;left:158px;width:900.0px">unorthographisches Leben.</div>
<div class="a doc" style="top:499.2px;left:184px;width:872.0px">Eines Tages aber beschloß eine kleine Zeile Blindtext, ihr Name war <i>Lorem Ipsum,</i> hinaus zu gehen in die weite</div>
<div class="a doc" style="top:521.4px;left:158px;width:900.0px">Grammatik. Der große Oxmox riet ihr davon ab, da es dort wimmele von bösen Kommata, wilden Fragezeichen und</div>
<div class="a doc" style="top:543.5px;left:158px;word-spacing:-0.16px;width:900.0px">hinterhältigen Semikoli, doch das Blindtextchen ließ sich nicht beirren. Es packte seine sieben Versalien, schob sich sein</div>
<div class="a doc" style="top:565.7px;left:158px;width:900.0px">Initial in den Gürtel und machte sich auf den Weg. Als es die ersten Hügel des Kursivgebirges erklommen hatte, warf es</div>
<div class="a doc" style="top:587.9px;left:158px;width:900.0px">einen letzten Blick zurück auf die Skyline seiner Heimatstadt Buchstabhausen, die Headline von Alphabetdorf und die</div>
<div class="a doc" style="top:610.0px;left:158px;word-spacing:-0.22px;width:900.0px">Subline seiner eigenen Straße, der Zeilengasse. Wehmütig lief ihm eine rhetorische Frage über die Wange, dann setzte es</div>
<div class="a doc l" style="top:632.1px;left:158px;width:900.0px">seinen Weg fort. Unterwegs traf es eine <i>Copy</i>.</div>
<div class="a doc" style="top:654.3px;left:184px;width:872.0px">Eines Tages aber beschloß eine kleine Zeile Blindtext, ihr Name war Lorem Ipsum, hinaus zu gehen in die weite</div>
<div class="a doc" style="top:676.5px;left:158px;width:900.0px">Grammatik. Der große Oxmox riet ihr davon ab, da es dort wimmele von bösen Kommata, wilden Fragezeichen und</div>
<div class="a doc" style="top:698.6px;left:158px;word-spacing:-0.16px;width:900.0px">hinterhältigen Semikoli, doch das Blindtextchen ließ sich nicht beirren. Es packte seine sieben Versalien, schob sich sein</div>
<div class="a doc" style="top:720.8px;left:158px;width:900.0px">Initial in den Gürtel und machte sich auf den Weg. Als es die ersten Hügel des Kursivgebirges erklommen hatte, warf es</div>
<div class="a doc" style="top:742.9px;left:158px;width:900.0px">einen letzten Blick zurück auf die Skyline seiner Heimatstadt Buchstabhausen, die Headline von Alphabetdorf und die</div>
<div class="a doc" style="top:765.0px;left:158px;word-spacing:-0.22px;width:900.0px">Subline seiner eigenen Straße, der Zeilengasse. Wehmütig lief ihm eine rhetorische Frage über die Wange, dann setzte es</div>
<div class="a doc l" style="top:787.2px;left:158px;width:900.0px">seinen Weg fort. Unterwegs traf es eine <i>Copy</i>.</div>
<div class="a doc" style="top:831.5px;left:158px;width:900.0px">Weit hinten, hinter den Wortbergen, fern der Länder Vokalien und Konsonantien leben die <i>Blindtexte</i>. Abgeschieden</div>
<div class="a doc" style="top:853.6px;left:158px;word-spacing:-0.57px;width:900.0px">wohnen sie in Buchstabhausen an der Küste eines großen Sprachozeans. Ein kleines Bächlein namens Duden fließt durch</div>
<div class="a doc" style="top:875.8px;left:158px;word-spacing:-1.32px;width:900.0px">ihren Ort und versorgt sie mit den nötigen Regelialien. Es ist ein paradiesmatisches Land, in dem einem gebratene Satzteile</div>
<div class="a doc" style="top:898.0px;left:158px;width:900.0px">in den Mund fliegen. Nicht einmal von der allmächtigen <i>Interpunktion</i> werden die Blindtexte beherrscht – ein geradezu</div>
<div class="a doc l" style="top:920.1px;left:158px;width:900.0px">unorthographisches Leben.</div>
<div class="a doc" style="top:942.2px;left:184px;width:872.0px">Eines Tages aber beschloß eine kleine Zeile Blindtext, ihr Name war Lorem Ipsum, hinaus zu gehen in die weite</div>
<div class="a doc" style="top:964.4px;left:158px;width:900.0px">Grammatik. Der große Oxmox riet ihr davon ab, da es dort wimmele von bösen Kommata, wilden Fragezeichen und</div>
<div class="a doc" style="top:986.5px;left:158px;word-spacing:-0.16px;width:900.0px">hinterhältigen Semikoli, doch das Blindtextchen ließ sich nicht beirren. Es packte seine sieben Versalien, schob sich sein</div>
<div class="a doc" style="top:1008.7px;left:158px;width:900.0px">Initial in den Gürtel und machte sich auf den Weg. Als es die ersten Hügel des Kursivgebirges erklommen hatte, warf es</div>
<div class="a doc" style="top:1030.8px;left:158px;width:900.0px">einen letzten Blick zurück auf die Skyline seiner Heimatstadt Buchstabhausen, die Headline von Alphabetdorf und die</div>
<div class="a doc" style="top:1053.0px;left:158px;word-spacing:-0.22px;width:900.0px">Subline seiner eigenen Straße, der Zeilengasse. Wehmütig lief ihm eine rhetorische Frage über die Wange, dann setzte es</div>
<div class="a doc l" style="top:1075.2px;left:158px;width:900.0px">seinen Weg fort.</div>
<div class="a" style="left:1064px;top:149px;width:472px;height:958px;background:#ececec;border-left:1px solid #d9d9d9"></div>
<div class="a" style="left:1088.0px;top:156.4px;font-family:'Liberation Sans',sans-serif;font-size:19px;line-height:19px;font-weight:normal;color:#1d1d1d;white-space:nowrap;letter-spacing:0.35px;-webkit-text-stroke:0.2px #1d1d1d;">Formatvorlagen</div>
<svg class="a" style="left:1507px;top:156px;" width="20" height="20" viewBox="0 0 20 20"><circle cx="10" cy="10" r="9" fill="#6c6c6c"/><path d="M6.6 6.6 L13.4 13.4 M13.4 6.6 L6.6 13.4" stroke="#f4f4f4" stroke-width="1.6" stroke-linecap="round"/></svg>
<div class="a" style="left:1088.0px;top:203.6px;font-family:'Liberation Sans',sans-serif;font-size:17px;line-height:17px;font-weight:normal;color:#222;white-space:nowrap;letter-spacing:0.1px;-webkit-text-stroke:0.2px #222;">Aktuelle Formatvorlage:</div>
<div class="a" style="left:1088.5px;top:235.4px;width:426px;height:31px;background:#fff;border:1.5px solid #c6c6c6"></div>
<div class="a" style="left:1112.0px;top:242.9px;font-family:'Liberation Serif',serif;font-size:12px;line-height:12px;font-weight:normal;color:#1a1a1a;white-space:nowrap;-webkit-text-stroke:0.15px #1a1a1a;transform:scaleX(0.95);transform-origin:0 0;">Folgeabsatz</div>
<div class="a" style="left:1494.0px;top:243.0px;font-family:'Liberation Sans',sans-serif;font-size:16px;line-height:16px;font-weight:bold;color:#3a86d6;white-space:nowrap;">¶</div>
<div class="a" style="left:1087px;top:283px;width:194px;height:26px;background:#fff;border-radius:6px;box-shadow:0 0.5px 1.5px rgba(0,0,0,0.3)"></div>
<div class="a" style="left:1319px;top:283px;width:194px;height:26px;background:#fff;border-radius:6px;box-shadow:0 0.5px 1.5px rgba(0,0,0,0.3)"></div>
<div class="a" style="left:1033.5px;top:286.6px;font-family:'Liberation Sans',sans-serif;font-size:17px;line-height:17px;font-weight:normal;color:#222;white-space:nowrap;-webkit-text-stroke:0.2px #222;width:300px;text-align:center;">Neue Formatvorlage...</div>
<div class="a" style="left:1265.5px;top:286.6px;font-family:'Liberation Sans',sans-serif;font-size:17px;line-height:17px;font-weight:normal;color:#222;white-space:nowrap;letter-spacing:0.1px;-webkit-text-stroke:0.2px #222;width:300px;text-align:center;">Alles auswählen</div>
<div class="a" style="left:1088.0px;top:330.6px;font-family:'Liberation Sans',sans-serif;font-size:17px;line-height:17px;font-weight:normal;color:#222;white-space:nowrap;letter-spacing:0.05px;-webkit-text-stroke:0.2px #222;">Formatvorlage übernehmen:</div>
<div class="a" style="left:1088.5px;top:358.5px;width:423px;height:749px;background:#fff"></div>
<div class="a" style="left:1497px;top:358.5px;width:14px;height:749px;background:#fafafa;border-left:1px solid #ededed;border-right:1px solid #e6e6e6"></div>
<div class="a" style="left:1091px;top:362.4px;width:404.4px;height:35.6px;background:#fff;border:1.5px solid #b8b8b8"></div>
<div class="a" style="left:1106.0px;top:374.4px;font-family:'Liberation Sans',sans-serif;font-size:14px;line-height:14px;font-weight:normal;color:#1e1e1e;white-space:nowrap;letter-spacing:0.1px;-webkit-text-stroke:0.15px #1e1e1e;">Formatierung löschen</div>
<div class="a" style="left:1093.5px;top:401px;width:399.5px;height:31px;background:#fff;border:1.5px solid #b8b8b8"></div>
<div class="a" style="left:1093.5px;top:401px;width:23px;height:31px;background:#40068f"></div>
<div class="a" style="left:954.3px;top:410.5px;font-family:'Liberation Sans',sans-serif;font-size:12px;line-height:12px;font-weight:normal;color:#fff;white-space:nowrap;-webkit-text-stroke:0.45px #fff;width:300px;text-align:center;">1</div>
<div class="a" style="left:1093.5px;top:437.7px;width:399.5px;height:30.100000000000023px;background:#fff;border:1.5px solid #8db1cc"></div>
<div class="a" style="left:1093.5px;top:437.7px;width:23px;height:30.100000000000023px;background:#836300"></div>
<div class="a" style="left:954.3px;top:446.8px;font-family:'Liberation Sans',sans-serif;font-size:12px;line-height:12px;font-weight:normal;color:#fff;white-space:nowrap;-webkit-text-stroke:0.45px #fff;width:300px;text-align:center;">2</div>
<div class="a" style="left:1093.5px;top:474px;width:399.5px;height:30.30000000000001px;background:#fff;border:1.5px solid #b8b8b8"></div>
<div class="a" style="left:1093.5px;top:474px;width:23px;height:30.30000000000001px;background:#8a0231"></div>
<div class="a" style="left:954.3px;top:483.2px;font-family:'Liberation Sans',sans-serif;font-size:12px;line-height:12px;font-weight:normal;color:#fff;white-space:nowrap;-webkit-text-stroke:0.45px #fff;width:300px;text-align:center;">3</div>
<div class="a" style="left:1093.5px;top:510px;width:399.5px;height:30.600000000000023px;background:#fff;border:1.5px solid #b8b8b8"></div>
<div class="a" style="left:1093.5px;top:510px;width:23px;height:30.600000000000023px;background:#108910"></div>
<div class="a" style="left:954.3px;top:519.3px;font-family:'Liberation Sans',sans-serif;font-size:12px;line-height:12px;font-weight:normal;color:#fff;white-space:nowrap;-webkit-text-stroke:0.45px #fff;width:300px;text-align:center;">4</div>
<div class="a" style="left:1093.5px;top:546px;width:399.5px;height:31px;background:#fff;border:1.5px solid #b8b8b8"></div>
<div class="a" style="left:1093.5px;top:546px;width:23px;height:31px;background:#e0524a"></div>
<div class="a" style="left:954.3px;top:555.5px;font-family:'Liberation Sans',sans-serif;font-size:12px;line-height:12px;font-weight:normal;color:#fff;white-space:nowrap;-webkit-text-stroke:0.45px #fff;width:300px;text-align:center;">5</div>
<div class="a" style="left:1126.0px;top:409.3px;font-family:'Liberation Serif',serif;font-size:13px;line-height:13px;font-weight:normal;color:#1a1a1a;white-space:nowrap;-webkit-text-stroke:0.2px #1a1a1a;transform:scaleX(0.9);transform-origin:0 0;">Erster Absatz</div>
<div class="a" style="left:1135.0px;top:445.9px;font-family:'Liberation Serif',serif;font-size:13px;line-height:13px;font-weight:normal;color:#1a1a1a;white-space:nowrap;-webkit-text-stroke:0.2px #1a1a1a;transform:scaleX(0.9);transform-origin:0 0;">Folgeabsatz</div>
<div class="a" style="left:1126.0px;top:482.1px;font-family:'Liberation Serif',serif;font-size:13px;line-height:13px;font-weight:bold;color:#111;white-space:nowrap;transform:scaleX(0.9);transform-origin:0 0;">Fließtext fett</div>
<div class="a" style="left:1126.0px;top:518.5px;font-family:'Liberation Serif',serif;font-size:13px;line-height:13px;font-weight:normal;color:#1a1a1a;white-space:nowrap;font-style:italic;-webkit-text-stroke:0.2px #1a1a1a;transform:scaleX(0.9);transform-origin:0 0;">Fließtext kursiv</div>
<div class="a" style="left:1126.0px;top:550.0px;font-family:'Liberation Serif',serif;font-size:21.5px;line-height:21.5px;font-weight:bold;color:#111;white-space:nowrap;-webkit-text-stroke:0.3px #111;transform:scaleX(0.95);transform-origin:0 0;">Überschrift 1</div>
</body></html>
